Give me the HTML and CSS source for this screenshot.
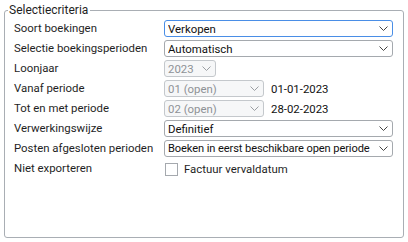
FILE: index.html
```html
<!DOCTYPE html>
<html>
<head>
    <title>Selectiecriteria</title>
    <link rel="stylesheet" href="styles.css">
</head>
<body>
    <fieldset class="criteria">
        <legend>Selectiecriteria</legend>

        <div class="form-grid">
            <label>Soort boekingen</label>
            <div class="select focus wide">
                <span class="value">Verkopen</span>
                <svg class="chevron" width="9" height="5" viewBox="0 0 9 5"><path d="M0.5 0.5 L4.5 4.5 L8.5 0.5" /></svg>
            </div>

            <label>Selectie boekingsperioden</label>
            <div class="select wide">
                <span class="value">Automatisch</span>
                <svg class="chevron" width="9" height="5" viewBox="0 0 9 5"><path d="M0.5 0.5 L4.5 4.5 L8.5 0.5" /></svg>
            </div>

            <label>Loonjaar</label>
            <div class="select disabled year">
                <span class="value">2023</span>
                <svg class="chevron" width="9" height="5" viewBox="0 0 9 5"><path d="M0.5 0.5 L4.5 4.5 L8.5 0.5" /></svg>
            </div>

            <label>Vanaf periode</label>
            <div class="with-date">
                <div class="select disabled period">
                    <span class="value">01 (open)</span>
                    <svg class="chevron" width="9" height="5" viewBox="0 0 9 5"><path d="M0.5 0.5 L4.5 4.5 L8.5 0.5" /></svg>
                </div>
                <span class="date">01-01-2023</span>
            </div>

            <label>Tot en met periode</label>
            <div class="with-date">
                <div class="select disabled period">
                    <span class="value">02 (open)</span>
                    <svg class="chevron" width="9" height="5" viewBox="0 0 9 5"><path d="M0.5 0.5 L4.5 4.5 L8.5 0.5" /></svg>
                </div>
                <span class="date">28-02-2023</span>
            </div>

            <label>Verwerkingswijze</label>
            <div class="select wide">
                <span class="value">Definitief</span>
                <svg class="chevron" width="9" height="5" viewBox="0 0 9 5"><path d="M0.5 0.5 L4.5 4.5 L8.5 0.5" /></svg>
            </div>

            <label>Posten afgesloten perioden</label>
            <div class="select wide">
                <span class="value long">Boeken in eerst beschikbare open periode</span>
                <svg class="chevron" width="9" height="5" viewBox="0 0 9 5"><path d="M0.5 0.5 L4.5 4.5 L8.5 0.5" /></svg>
            </div>

            <label>Niet exporteren</label>
            <div class="check">
                <span class="box"></span>
                <span>Factuur vervaldatum</span>
            </div>
        </div>
    </fieldset>
</body>
</html>
```

FILE: styles.css
```css
body {
    margin: 0;
    padding: 3px 4px 0 4px;
    font-family: Roboto, "Noto Sans", Arial, sans-serif;
    font-size: 11.4px;
    color: #1f1f1f;
    background-color: #fff;
}

.criteria {
    margin: 0;
    width: 400px;
    height: 235px;
    box-sizing: border-box;
    border: 1px solid #a9aeb4;
    border-radius: 3px;
    padding: 3px 9px 0 9px;
}

.criteria legend {
    margin-left: -6px;
    padding: 0 2px 0 1px;
    font-size: 12px;
    line-height: 14px;
    color: #1f1f1f;
}

.form-grid {
    display: grid;
    grid-template-columns: 150px 229px;
    grid-auto-rows: 17px;
    row-gap: 3px;
    align-items: center;
}

.form-grid label {
    line-height: 17px;
    white-space: nowrap;
}

.select {
    height: 17px;
    box-sizing: border-box;
    border: 1px solid #a5a9ae;
    border-radius: 3px;
    display: flex;
    align-items: center;
    gap: 2px;
    padding: 0 4px 0 3px;
    background-color: #fff;
    color: #111;
    white-space: nowrap;
}

.select .value {
    flex: 1;
    min-width: 0;
    overflow: hidden;
}

.select .long {
    font-size: 11.1px;
    letter-spacing: -0.1px;
}

.select.focus {
    border-color: #4a8ee6;
}

.select.disabled {
    background-color: #f6f7f8;
    border-color: #c4c8cc;
    color: #8e9296;
}

.chevron {
    flex: none;
    fill: none;
    stroke: #444;
    stroke-width: 1;
}

.disabled .chevron {
    stroke: #9a9ea2;
}

.wide {
    width: 229px;
}

.year {
    width: 52px;
}

.period {
    width: 100px;
}

.with-date {
    display: flex;
    align-items: center;
    gap: 7px;
}

.date {
    color: #111;
}

.check {
    display: flex;
    align-items: center;
    gap: 6px;
    padding-left: 1px;
}

.box {
    width: 11px;
    height: 11px;
    border: 1px solid #a5a9ae;
    background-color: #fff;
    margin-top: 2px;
}
```
